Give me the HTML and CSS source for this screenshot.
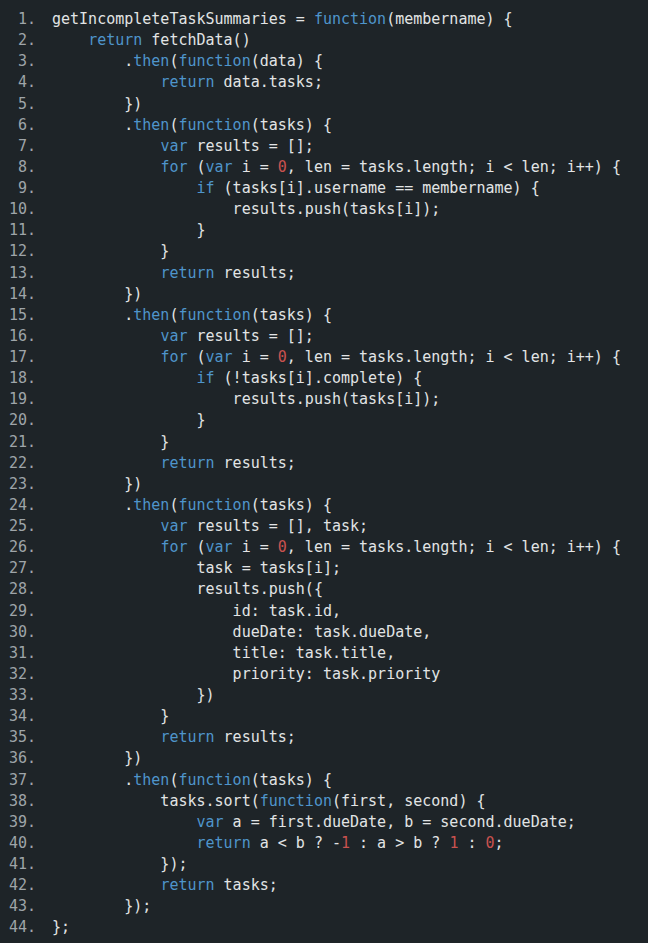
FILE: index.html
```html
<!DOCTYPE html>
<html>
<head>
<meta charset="utf-8">
<link rel="stylesheet" href="styles.css">
</head>
<body>
<div class="code">
<div class="ln"><span class="n">1.</span><span class="c">getIncompleteTaskSummaries = <span class="k">function</span>(membername) {</span></div>
<div class="ln"><span class="n">2.</span><span class="c">    <span class="k">return</span> fetchData()</span></div>
<div class="ln"><span class="n">3.</span><span class="c">        .<span class="k">then</span>(<span class="k">function</span>(data) {</span></div>
<div class="ln"><span class="n">4.</span><span class="c">            <span class="k">return</span> data.tasks;</span></div>
<div class="ln"><span class="n">5.</span><span class="c">        })</span></div>
<div class="ln"><span class="n">6.</span><span class="c">        .<span class="k">then</span>(<span class="k">function</span>(tasks) {</span></div>
<div class="ln"><span class="n">7.</span><span class="c">            <span class="k">var</span> results = [];</span></div>
<div class="ln"><span class="n">8.</span><span class="c">            <span class="k">for</span> (<span class="k">var</span> i = <span class="m">0</span>, len = tasks.length; i &lt; len; i++) {</span></div>
<div class="ln"><span class="n">9.</span><span class="c">                <span class="k">if</span> (tasks[i].username == membername) {</span></div>
<div class="ln"><span class="n">10.</span><span class="c">                    results.push(tasks[i]);</span></div>
<div class="ln"><span class="n">11.</span><span class="c">                }</span></div>
<div class="ln"><span class="n">12.</span><span class="c">            }</span></div>
<div class="ln"><span class="n">13.</span><span class="c">            <span class="k">return</span> results;</span></div>
<div class="ln"><span class="n">14.</span><span class="c">        })</span></div>
<div class="ln"><span class="n">15.</span><span class="c">        .<span class="k">then</span>(<span class="k">function</span>(tasks) {</span></div>
<div class="ln"><span class="n">16.</span><span class="c">            <span class="k">var</span> results = [];</span></div>
<div class="ln"><span class="n">17.</span><span class="c">            <span class="k">for</span> (<span class="k">var</span> i = <span class="m">0</span>, len = tasks.length; i &lt; len; i++) {</span></div>
<div class="ln"><span class="n">18.</span><span class="c">                <span class="k">if</span> (!tasks[i].complete) {</span></div>
<div class="ln"><span class="n">19.</span><span class="c">                    results.push(tasks[i]);</span></div>
<div class="ln"><span class="n">20.</span><span class="c">                }</span></div>
<div class="ln"><span class="n">21.</span><span class="c">            }</span></div>
<div class="ln"><span class="n">22.</span><span class="c">            <span class="k">return</span> results;</span></div>
<div class="ln"><span class="n">23.</span><span class="c">        })</span></div>
<div class="ln"><span class="n">24.</span><span class="c">        .<span class="k">then</span>(<span class="k">function</span>(tasks) {</span></div>
<div class="ln"><span class="n">25.</span><span class="c">            <span class="k">var</span> results = [], task;</span></div>
<div class="ln"><span class="n">26.</span><span class="c">            <span class="k">for</span> (<span class="k">var</span> i = <span class="m">0</span>, len = tasks.length; i &lt; len; i++) {</span></div>
<div class="ln"><span class="n">27.</span><span class="c">                task = tasks[i];</span></div>
<div class="ln"><span class="n">28.</span><span class="c">                results.push({</span></div>
<div class="ln"><span class="n">29.</span><span class="c">                    id: task.id,</span></div>
<div class="ln"><span class="n">30.</span><span class="c">                    dueDate: task.dueDate,</span></div>
<div class="ln"><span class="n">31.</span><span class="c">                    title: task.title,</span></div>
<div class="ln"><span class="n">32.</span><span class="c">                    priority: task.priority</span></div>
<div class="ln"><span class="n">33.</span><span class="c">                })</span></div>
<div class="ln"><span class="n">34.</span><span class="c">            }</span></div>
<div class="ln"><span class="n">35.</span><span class="c">            <span class="k">return</span> results;</span></div>
<div class="ln"><span class="n">36.</span><span class="c">        })</span></div>
<div class="ln"><span class="n">37.</span><span class="c">        .<span class="k">then</span>(<span class="k">function</span>(tasks) {</span></div>
<div class="ln"><span class="n">38.</span><span class="c">            tasks.sort(<span class="k">function</span>(first, second) {</span></div>
<div class="ln"><span class="n">39.</span><span class="c">                <span class="k">var</span> a = first.dueDate, b = second.dueDate;</span></div>
<div class="ln"><span class="n">40.</span><span class="c">                <span class="k">return</span> a &lt; b ? -<span class="m">1</span> : a &gt; b ? <span class="m">1</span> : <span class="m">0</span>;</span></div>
<div class="ln"><span class="n">41.</span><span class="c">            });</span></div>
<div class="ln"><span class="n">42.</span><span class="c">            <span class="k">return</span> tasks;</span></div>
<div class="ln"><span class="n">43.</span><span class="c">        });</span></div>
<div class="ln"><span class="n">44.</span><span class="c">};</span></div>
</div>
</body>
</html>
```
FILE: styles.css
```css
html, body {
  margin: 0;
  padding: 0;
  background: #1e2428;
}
.code {
  padding: 9px 0 0 0;
  font-family: "DejaVu Sans Mono", monospace;
  font-size: 15px;
  line-height: 21.13px;
  color: #e2e4e5;
}
.ln {
  display: flex;
  white-space: pre;
}
.n {
  width: 36px;
  text-align: right;
  color: #9fa5a9;
  flex: none;
}
.c {
  margin-left: 16px;
}
.k {
  color: #4f95cb;
}
.m {
  color: #c9524f;
}
```
